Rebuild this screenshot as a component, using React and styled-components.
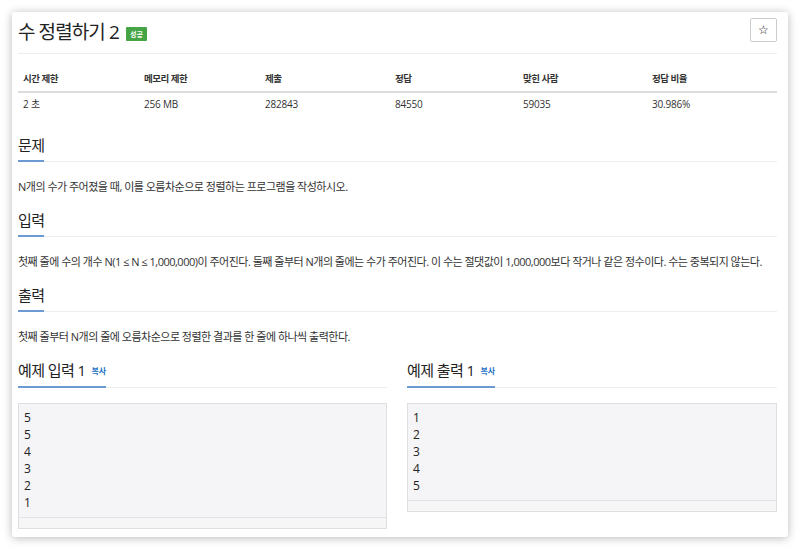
import React from 'react';
import styled, { createGlobalStyle } from 'styled-components';

const GlobalStyle = createGlobalStyle`
  body {
    margin: 0;
    background: #ffffff;
    font-family: 'Open Sans', 'Noto Sans CJK KR', sans-serif;
    color: #333333;
  }
`;

const Card = styled.div`
  box-sizing: border-box;
  width: 776px;
  height: 525px;
  margin: 12px;
  padding: 5px 11px 0 6px;
  background: #ffffff;
  border-radius: 3px;
  box-shadow: 0 1px 10px rgba(0, 0, 0, 0.28);
  overflow: hidden;
`;

const TitleRow = styled.div`
  display: flex;
  align-items: flex-start;
  justify-content: space-between;
  height: 36px;
  border-bottom: 1px solid #eeeeee;
`;

const TitleGroup = styled.div`
  display: flex;
  align-items: center;
  gap: 7px;
`;

const Title = styled.h1`
  margin: 0;
  font-size: 19px;
  line-height: 30px;
  font-weight: 400;
  letter-spacing: -0.9px;
  color: #222222;
`;

const Badge = styled.span`
  display: inline-flex;
  align-items: center;
  justify-content: center;
  width: 21px;
  height: 14px;
  margin-top: 3px;
  background: #45a545;
  color: #ffffff;
  font-size: 7px;
  font-weight: 700;
  border-radius: 1px;
`;

const StarButton = styled.button`
  width: 27px;
  height: 24px;
  margin-top: 1px;
  padding: 0;
  background: #ffffff;
  border: 1px solid #cccccc;
  border-radius: 2px;
  font-family: 'DejaVu Sans', sans-serif;
  font-size: 12px;
  font-weight: 700;
  color: #111111;
`;

const InfoTable = styled.div`
  display: grid;
  grid-template-columns: 121px 121px 130px 128px 129px 1fr;
  margin-top: 13px;
  font-size: 10px;
`;

const HeadCell = styled.div`
  padding: 0 5px;
  height: 24px;
  line-height: 24px;
  font-weight: 700;
  font-size: 9.5px;
  letter-spacing: -0.5px;
  border-bottom: 2px solid #dddddd;
`;

const Cell = styled.div`
  padding: 0 5px;
  height: 22px;
  line-height: 22px;
  letter-spacing: -0.2px;
`;

const Section = styled.section`
  margin-top: ${p => p.$first ? '19px' : '13px'};
`;

const Heading = styled.div`
  border-bottom: 1px solid #eeeeee;
`;

const HeadingText = styled.h2`
  display: inline-block;
  margin: 0 0 -1px;
  padding-bottom: 4px;
  font-size: 15px;
  line-height: 22px;
  font-weight: 400;
  letter-spacing: -0.6px;
  color: #222222;
  border-bottom: 2px solid #6a9cd3;
`;

const CopyLink = styled.span`
  margin-left: 6px;
  font-size: 8px;
  font-weight: 700;
  letter-spacing: 0;
  color: #1a6fc4;
  vertical-align: 2px;
`;

const Paragraph = styled.p`
  margin: 16px 0 0;
  font-size: 11px;
  line-height: 18px;
  letter-spacing: -0.5px;
`;

const Samples = styled.div`
  display: grid;
  grid-template-columns: 369px 370px;
  gap: 20px;
  margin-top: 13px;
  align-items: start;
`;

const Pre = styled.div`
  margin-top: 15px;
  background: #f5f5f7;
  border: 1px solid #dedee3;
`;

const PreBody = styled.pre`
  margin: 0;
  padding: 5px 5px 6px;
  font-family: 'Open Sans', 'Noto Sans CJK KR', sans-serif;
  font-size: 12px;
  line-height: 17px;
  color: #222222;
`;

const PreFooter = styled.div`
  height: 10px;
  border-top: 1px solid #e3e3e7;
  background: #f6f6f7;
`;

const headers = ['시간 제한', '메모리 제한', '제출', '정답', '맞힌 사람', '정답 비율'];
const values = ['2 초', '256 MB', '282843', '84550', '59035', '30.986%'];

const sections = [
  { title: '문제', text: 'N개의 수가 주어졌을 때, 이를 오름차순으로 정렬하는 프로그램을 작성하시오.' },
  {
    title: '입력',
    text: '첫째 줄에 수의 개수 N(1 ≤ N ≤ 1,000,000)이 주어진다. 둘째 줄부터 N개의 줄에는 수가 주어진다. 이 수는 절댓값이 1,000,000보다 작거나 같은 정수이다. 수는 중복되지 않는다.'
  },
  { title: '출력', text: '첫째 줄부터 N개의 줄에 오름차순으로 정렬한 결과를 한 줄에 하나씩 출력한다.' }
];

const samples = [
  { title: '예제 입력 1', body: '5\n5\n4\n3\n2\n1' },
  { title: '예제 출력 1', body: '1\n2\n3\n4\n5' }
];

const App = () => (
  <>
    <GlobalStyle />
    <Card>
      <TitleRow>
        <TitleGroup>
          <Title>수 정렬하기 2</Title>
          <Badge>성공</Badge>
        </TitleGroup>
        <StarButton>☆</StarButton>
      </TitleRow>

      <InfoTable>
        {headers.map(h => (
          <HeadCell key={h}>{h}</HeadCell>
        ))}
        {values.map(v => (
          <Cell key={v}>{v}</Cell>
        ))}
      </InfoTable>

      {sections.map((s, i) => (
        <Section key={s.title} $first={i === 0}>
          <Heading>
            <HeadingText>{s.title}</HeadingText>
          </Heading>
          <Paragraph>{s.text}</Paragraph>
        </Section>
      ))}

      <Samples>
        {samples.map(s => (
          <div key={s.title}>
            <Heading>
              <HeadingText>
                {s.title}
                <CopyLink>복사</CopyLink>
              </HeadingText>
            </Heading>
            <Pre>
              <PreBody>{s.body}</PreBody>
              <PreFooter />
            </Pre>
          </div>
        ))}
      </Samples>
    </Card>
  </>
);

export default App;
